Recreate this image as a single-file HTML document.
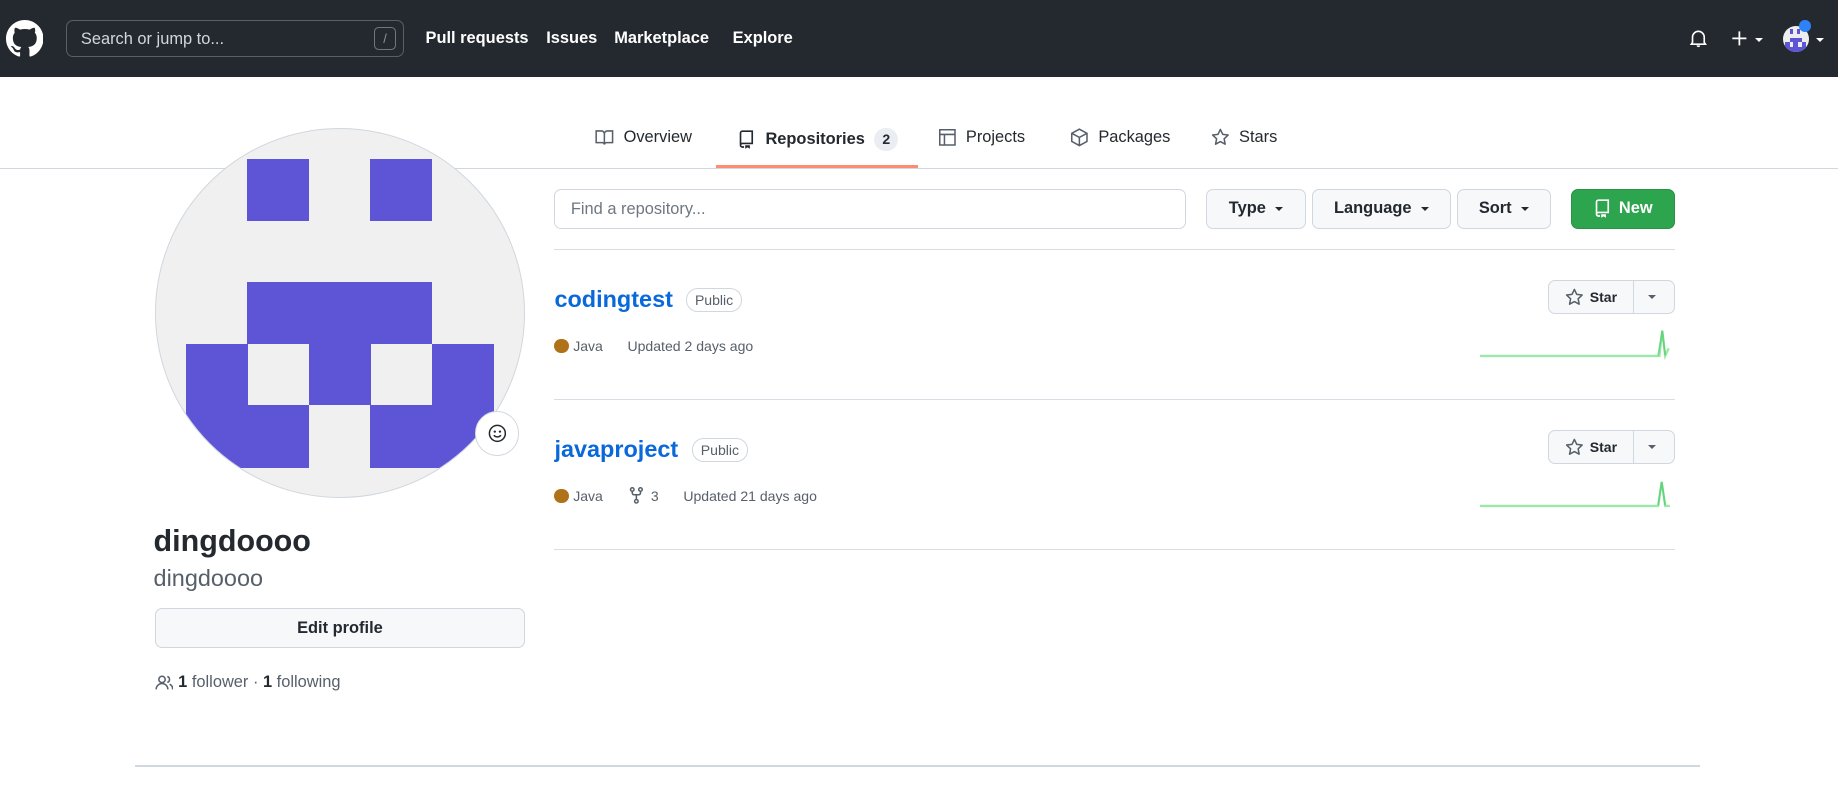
<!DOCTYPE html>
<html><head><meta charset="utf-8">
<style>
html,body{margin:0;padding:0;background:#fff;overflow:hidden}
body{zoom:1.1722;width:1568px;height:672px;font-family:"Liberation Sans",Arial,sans-serif;color:#24292f;position:relative}
.abs{position:absolute}
.hdr{position:absolute;left:0;top:0;width:1568px;height:66px;background:#24292f}
.nav{position:absolute;top:25px;color:#fff;font-weight:bold;font-size:14px}
.tab{position:absolute;top:109px;font-size:14px;color:#24292f;display:flex;align-items:center}
.tab svg{margin-right:8px}
.btn{position:absolute;background:#f6f8fa;border:1px solid #d0d7de;border-radius:6px;box-sizing:border-box;font-size:14px;font-weight:bold;display:flex;align-items:center;justify-content:center;color:#24292f}
.caret{display:inline-block;width:0;height:0;border-left:4px solid transparent;border-right:4px solid transparent;border-top:4px solid #24292f;margin-left:8px}
.repo{position:absolute;left:473px;font-size:20px;font-weight:bold;color:#0969da}
.lbl{position:absolute;font-size:12px;color:#57606a;border:1px solid #d0d7de;border-radius:10px;padding:0 7px;height:20px;line-height:19px;box-sizing:border-box;font-weight:normal}
.meta{position:absolute;left:473px;font-size:12px;color:#57606a;display:flex;align-items:center}
.dot{width:12px;height:12px;border-radius:50%;background:#b07219;margin-right:4px}
.hr{position:absolute;height:1px;background:#d8dee4}
.star{position:absolute;left:1321px;width:108px;height:29px;border:1px solid #d0d7de;border-radius:6px;background:#f6f8fa;box-sizing:border-box;font-size:12px;font-weight:bold}
.star .s{position:absolute;left:0;top:0;width:71px;height:27px;border-right:1px solid #d0d7de;display:flex;align-items:center;justify-content:center}
.star .c{position:absolute;left:84px;top:12px;width:0;height:0;border-left:4px solid transparent;border-right:4px solid transparent;border-top:4px solid #57606a}
</style></head><body>
<div class="hdr">
 <svg class="abs" style="left:5px;top:17px" width="32" height="32" viewBox="0 0 16 16"><path fill="#fff" d="M8 0C3.58 0 0 3.58 0 8c0 3.54 2.29 6.53 5.47 7.59.4.07.55-.17.55-.38 0-.19-.01-.82-.01-1.49-2.01.37-2.53-.49-2.69-.94-.09-.23-.48-.94-.82-1.13-.28-.15-.68-.52-.01-.53.63-.01 1.08.58 1.23.82.72 1.21 1.87.87 2.33.66.07-.52.28-.87.51-1.07-1.78-.2-3.64-.89-3.64-3.95 0-.87.31-1.59.82-2.15-.08-.2-.36-1.02.08-2.12 0 0 .67-.21 2.2.82.64-.18 1.32-.27 2-.27.68 0 1.36.09 2 .27 1.53-1.04 2.2-.82 2.2-.82.44 1.1.16 1.92.08 2.12.51.56.82 1.27.82 2.15 0 3.07-1.87 3.75-3.65 3.95.29.25.54.73.54 1.48 0 1.07-.01 1.93-.01 2.2 0 .21.15.46.55.38A8.013 8.013 0 0016 8c0-4.42-3.58-8-8-8z"/></svg>
 <div class="abs" style="left:56px;top:17px;width:289px;height:32px;border:1px solid #57606a;border-radius:6px;box-sizing:border-box"></div>
 <div class="abs" style="left:69px;top:26px;font-size:14px;color:#d0d7de">Search or jump to...</div>
 <div class="abs" style="left:319px;top:23px;width:19px;height:20px;border:1px solid #6e7781;border-radius:4px;box-sizing:border-box;color:#8c959f;font-size:11px;text-align:center;line-height:18px">/</div>
 <div class="nav" style="left:363px">Pull requests</div>
 <div class="nav" style="left:466px">Issues</div>
 <div class="nav" style="left:524px">Marketplace</div>
 <div class="nav" style="left:625px">Explore</div>
 <svg class="abs" style="left:1441px;top:25px" width="16" height="16" viewBox="0 0 16 16"><path fill="none" stroke="#fff" stroke-width="1.4" d="M3 11.5V7a5 5 0 0110 0v4.5l1 1.5H2z"/><path fill="#fff" d="M6.5 14h3a1.5 1.5 0 01-3 0z"/></svg>
 <svg class="abs" style="left:1476px;top:25px" width="16" height="16" viewBox="0 0 16 16"><path stroke="#fff" stroke-width="1.5" d="M8 2v12M2 8h12"/></svg>
 <div class="abs" style="left:1497px;top:32px;border-left:4px solid transparent;border-right:4px solid transparent;border-top:4px solid #fff"></div>
 <div class="abs" style="left:1521px;top:22px;width:22px;height:22px;border-radius:50%;background:#eee;overflow:hidden">
  <div class="abs" style="left:6px;top:3px;width:3px;height:4px;background:#5d55d6"></div><div class="abs" style="left:12px;top:3px;width:3px;height:4px;background:#5d55d6"></div>
  <div class="abs" style="left:6px;top:10px;width:10px;height:4px;background:#5d55d6"></div><div class="abs" style="left:2px;top:14px;width:4px;height:4px;background:#5d55d6"></div><div class="abs" style="left:9px;top:14px;width:4px;height:4px;background:#5d55d6"></div><div class="abs" style="left:16px;top:14px;width:4px;height:4px;background:#5d55d6"></div><div class="abs" style="left:2px;top:18px;width:18px;height:4px;background:#5d55d6"></div>
 </div>
 <div class="abs" style="left:1535px;top:17px;width:10px;height:10px;border-radius:50%;background:#2f81f7"></div>
 <div class="abs" style="left:1549px;top:32px;border-left:4px solid transparent;border-right:4px solid transparent;border-top:4px solid #fff"></div>
</div>

<div class="hr" style="left:0;top:143px;width:1568px;background:#d0d7de"></div>
<div class="tab" style="left:508px"><svg width="16" height="16" viewBox="0 0 16 16"><path fill="none" stroke="#57606a" stroke-width="1.3" d="M1 2.5h4.5A2.5 2.5 0 018 5v9a2 2 0 00-2-1.5H1zM15 2.5h-4.5A2.5 2.5 0 008 5v9a2 2 0 012-1.5h5z"/></svg>Overview</div>
<div class="tab" style="left:629px;font-weight:bold"><svg width="16" height="16" viewBox="0 0 16 16"><path fill="none" stroke="#24292f" stroke-width="1.4" d="M3 12.5V2.5A1.5 1.5 0 014.5 1H13v10.5H4.5A1.5 1.5 0 003 13a1.5 1.5 0 001.5 1.5H6"/><path fill="#24292f" d="M7 13h4v3l-2-1.2L7 16z"/></svg>Repositories<span style="margin-left:8px;background:#eaeef2;border-radius:10px;padding:0 7px;font-size:12px;line-height:20px;font-weight:bold">2</span></div>
<div class="abs" style="left:611px;top:141px;width:172px;height:2px;background:#fd8c73"></div>
<div class="tab" style="left:800px"><svg width="16" height="16" viewBox="0 0 16 16"><path fill="none" stroke="#57606a" stroke-width="1.3" d="M1.5 1.5h13v13h-13zM1.5 5.5h13M5.5 5.5v9"/></svg>Projects</div>
<div class="tab" style="left:913px"><svg width="16" height="16" viewBox="0 0 16 16"><path fill="none" stroke="#57606a" stroke-width="1.3" d="M8 1l6.5 3.5v7L8 15l-6.5-3.5v-7zM1.5 4.5L8 8l6.5-3.5M8 8v7"/></svg>Packages</div>
<div class="tab" style="left:1033px"><svg width="16" height="16" viewBox="0 0 16 16"><path fill="none" stroke="#57606a" stroke-width="1.3" stroke-linejoin="round" d="M8 1.2l2 4.2 4.6.6-3.4 3.2.9 4.6L8 11.6l-4.1 2.2.9-4.6L1.4 6l4.6-.6z"/></svg>Stars</div>

<div class="abs" style="left:132px;top:109px;width:316px;height:316px;border-radius:50%;background:#f0f0f0;border:1px solid #d0d7de;box-sizing:border-box;overflow:hidden">
 <div class="abs" style="left:78px;top:26px;width:53px;height:53px;background:#5d55d6"></div>
 <div class="abs" style="left:183px;top:26px;width:53px;height:53px;background:#5d55d6"></div>
 <div class="abs" style="left:78px;top:131px;width:158px;height:53px;background:#5d55d6"></div>
 <div class="abs" style="left:26px;top:184px;width:53px;height:52px;background:#5d55d6"></div>
 <div class="abs" style="left:131px;top:184px;width:53px;height:52px;background:#5d55d6"></div>
 <div class="abs" style="left:236px;top:184px;width:53px;height:52px;background:#5d55d6"></div>
 <div class="abs" style="left:26px;top:236px;width:105px;height:53px;background:#5d55d6"></div>
 <div class="abs" style="left:183px;top:236px;width:106px;height:53px;background:#5d55d6"></div>
</div>
<div class="abs" style="left:405px;top:351px;width:38px;height:38px;border-radius:50%;background:#fff;border:1px solid #d0d7de;box-sizing:border-box"></div>
<svg class="abs" style="left:416px;top:362px" width="16" height="16" viewBox="0 0 16 16"><circle cx="8" cy="8" r="6.8" fill="none" stroke="#24292f" stroke-width="1.3"/><circle cx="5.8" cy="6.5" r="1" fill="#24292f"/><circle cx="10.2" cy="6.5" r="1" fill="#24292f"/><path d="M5 9.5a3.5 3 0 006 0" fill="none" stroke="#24292f" stroke-width="1.3"/></svg>

<div class="abs" style="left:131px;top:446px;font-size:26px;font-weight:bold;line-height:32px">dingdoooo</div>
<div class="abs" style="left:131px;top:480px;font-size:20px;font-weight:300;color:#57606a;line-height:26px">dingdoooo</div>
<div class="btn" style="left:132px;top:519px;width:316px;height:34px">Edit profile</div>
<svg class="abs" style="left:132px;top:574px" width="16" height="16" viewBox="0 0 16 16"><circle cx="6" cy="5.5" r="2.7" fill="none" stroke="#57606a" stroke-width="1.3"/><path d="M1 14a5 5 0 0110 0" fill="none" stroke="#57606a" stroke-width="1.3"/><path d="M10.5 3a2.6 2.6 0 010 5M12.5 9.5a4.5 4.5 0 012.5 4.5" fill="none" stroke="#57606a" stroke-width="1.3"/></svg>
<div class="abs" style="left:152px;top:574px;font-size:14px;color:#57606a"><b style="color:#24292f">1</b> follower · <b style="color:#24292f">1</b> following</div>
<div class="hr" style="left:115px;top:653px;width:1335px;background:#d0d7de"></div>

<div class="abs" style="left:473px;top:161px;width:539px;height:34px;border:1px solid #d0d7de;border-radius:6px;box-sizing:border-box"></div>
<div class="abs" style="left:487px;top:171px;font-size:14px;color:#6e7781">Find a repository...</div>
<div class="btn" style="left:1029px;top:161px;width:85px;height:34px">Type<span class="caret"></span></div>
<div class="btn" style="left:1119px;top:161px;width:119px;height:34px">Language<span class="caret"></span></div>
<div class="btn" style="left:1243px;top:161px;width:80px;height:34px">Sort<span class="caret"></span></div>
<div class="btn" style="left:1340px;top:161px;width:89px;height:34px;background:#2da44e;border-color:#2a9147;color:#fff"><svg width="16" height="16" viewBox="0 0 16 16" style="margin-right:6px"><path fill="none" stroke="#fff" stroke-width="1.4" d="M3 12.5V2.5A1.5 1.5 0 014.5 1H13v10.5H4.5A1.5 1.5 0 003 13a1.5 1.5 0 001.5 1.5H6"/><path fill="#fff" d="M7 13h4v3l-2-1.2L7 16z"/></svg>New</div>
<div class="hr" style="left:473px;top:212px;width:956px"></div>

<div class="repo" style="top:244px">codingtest</div>
<div class="lbl" style="left:585px;top:246px">Public</div>
<div class="meta" style="top:288px"><span class="dot"></span>Java<span style="margin-left:21px">Updated 2 days ago</span></div>
<div class="star" style="top:239px"><div class="s"><svg width="16" height="16" viewBox="0 0 16 16" style="margin-right:5px"><path fill="none" stroke="#57606a" stroke-width="1.3" stroke-linejoin="round" d="M8 1.2l2 4.2 4.6.6-3.4 3.2.9 4.6L8 11.6l-4.1 2.2.9-4.6L1.4 6l4.6-.6z"/></svg>Star</div><div class="c"></div></div>
<svg class="abs" style="left:1263px;top:278px" width="166" height="30"><path d="M0 25.5H153L155.5 4 158 25.5 161 19" fill="none" stroke="#9be9a8" stroke-width="2"/><path d="M152 25L155.5 4 158 25" fill="none" stroke="#40c463" stroke-width="1.5" opacity=".6"/></svg>
<div class="hr" style="left:473px;top:340px;width:956px"></div>

<div class="repo" style="top:372px">javaproject</div>
<div class="lbl" style="left:590px;top:374px">Public</div>
<div class="meta" style="top:415px"><span class="dot"></span>Java<svg width="16" height="16" viewBox="0 0 16 16" style="margin-left:21px;margin-right:4px"><circle cx="4.5" cy="3" r="1.5" fill="none" stroke="#57606a" stroke-width="1.3"/><circle cx="11.5" cy="3" r="1.5" fill="none" stroke="#57606a" stroke-width="1.3"/><circle cx="8" cy="13" r="1.5" fill="none" stroke="#57606a" stroke-width="1.3"/><path d="M4.5 4.5v1.5a1.5 1.5 0 001.5 1.5h4a1.5 1.5 0 001.5-1.5V4.5M8 7.5v4" fill="none" stroke="#57606a" stroke-width="1.3"/></svg>3<span style="margin-left:21px">Updated 21 days ago</span></div>
<div class="star" style="top:367px"><div class="s"><svg width="16" height="16" viewBox="0 0 16 16" style="margin-right:5px"><path fill="none" stroke="#57606a" stroke-width="1.3" stroke-linejoin="round" d="M8 1.2l2 4.2 4.6.6-3.4 3.2.9 4.6L8 11.6l-4.1 2.2.9-4.6L1.4 6l4.6-.6z"/></svg>Star</div><div class="c"></div></div>
<svg class="abs" style="left:1263px;top:406px" width="166" height="30"><path d="M0 25.5H152L155 5 158 25.5H162" fill="none" stroke="#9be9a8" stroke-width="2"/><path d="M152 25L155 5 158 25" fill="none" stroke="#40c463" stroke-width="1.5" opacity=".6"/></svg>
<div class="hr" style="left:473px;top:468px;width:956px"></div>
</body></html>
